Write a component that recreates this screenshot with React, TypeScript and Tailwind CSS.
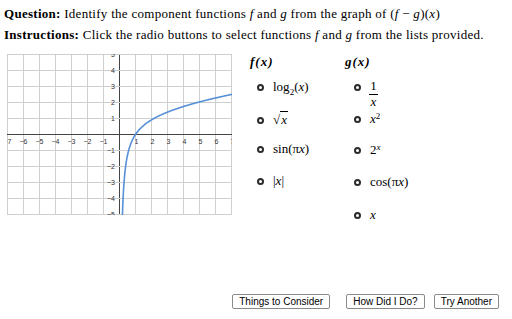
import React from 'react'

const serif = { fontFamily: '"Liberation Serif", "DejaVu Serif", serif' }

// plot mapping: 16px per unit, x in [-7,7], y in [-5,5]
const X = (x: number) => 0.5 + (x + 7) * 16
const Y = (y: number) => 0.5 + (5 - y) * 16

function curvePath() {
  const pts: string[] = []
  for (let i = 0; i <= 300; i++) {
    const x = 0.17 + (7.2 - 0.17) * Math.pow(i / 300, 1.8)
    const y = Math.sqrt(x) - 1 / x
    pts.push(`${i === 0 ? 'M' : 'L'}${X(x).toFixed(2)},${Y(y).toFixed(2)}`)
  }
  return pts.join(' ')
}

function Graph() {
  const xs = [-7, -6, -5, -4, -3, -2, -1, 0, 1, 2, 3, 4, 5, 6, 7]
  const ys = [5, 4, 3, 2, 1, 0, -1, -2, -3, -4, -5]
  return (
    <svg width="225" height="161" viewBox="0 0 225 161" className="block shrink-0 overflow-hidden">
      {xs.map(x => (
        <line key={'v' + x} x1={X(x)} y1={0} x2={X(x)} y2={161} stroke={x === 0 ? '#444' : '#cfcfcf'} strokeWidth="1" />
      ))}
      {ys.map(y => (
        <line key={'h' + y} x1={0} y1={Y(y)} x2={225} y2={Y(y)} stroke={y === 0 ? '#444' : '#cfcfcf'} strokeWidth="1" />
      ))}
      <g fontFamily='"Liberation Sans", Arial, sans-serif' fontSize="7" fill="#333">
        {xs.filter(x => x !== 0).map(x => (
          <text key={'lx' + x} x={X(x) + (x > 0 ? 1 : 0)} y={Y(0) + 9.8} textAnchor="middle">
            {x < 0 ? `−${-x}` : x}
          </text>
        ))}
        {ys.filter(y => y !== 0).map(y => (
          <text key={'ly' + y} x={X(0) - 4.5} y={Y(y) + 2.6} textAnchor="end">
            {y < 0 ? `−${-y}` : y}
          </text>
        ))}
      </g>
      <path d={curvePath()} fill="none" stroke="#5690d8" strokeWidth="1.6" strokeLinejoin="round" />
    </svg>
  )
}

function Radio() {
  return <span className="block w-[7px] h-[7px] rounded-full border-[2px] border-[#2b2b2b] shrink-0" />
}

function Opt({ children, mt, indent }: { children: React.ReactNode; mt: string; indent: string }) {
  return (
    <div className={`flex items-center h-[14px] ${mt} ${indent}`}>
      <Radio />
      <div className="ml-[9px] text-[13px] leading-[14px] whitespace-nowrap" style={serif}>
        {children}
      </div>
    </div>
  )
}

const I = ({ children }: { children: React.ReactNode }) => <i>{children}</i>

export default function App() {
  return (
    <div className="w-[512px] h-[319px] bg-white text-black flex flex-col overflow-hidden" style={serif}>
      <div className="pl-[4px] pt-[6px] text-[13px] leading-[16px] tracking-[0.28px] whitespace-nowrap">
        <p>
          <b>Question:</b> Identify the component functions <I>f</I> and <I>g</I> from the graph of (<I>f</I> − <I>g</I>)(<I>x</I>)
        </p>
        <p className="mt-[5px]">
          <b>Instructions:</b> Click the radio buttons to select functions <I>f</I> and <I>g</I> from the lists provided.
        </p>
      </div>

      <div className="flex mt-[11px] pl-[7px]">
        <Graph />

        <div className="ml-[18px] w-[95px] flex flex-col">
          <div className="text-[13px] leading-[16px] font-bold italic tracking-[1px]">f(x)</div>
          <Opt mt="mt-[10px]" indent="ml-[7px]">
            log<sub className="text-[9px] align-[-2px]">2</sub>(<I>x</I>)
          </Opt>
          <Opt mt="mt-[19px]" indent="ml-[7px]">
            <span>√<span className="border-t border-black pl-[1px] pr-[1px]"><I>x</I></span></span>
          </Opt>
          <Opt mt="mt-[15px]" indent="ml-[7px]">
            sin(π<I>x</I>)
          </Opt>
          <Opt mt="mt-[18px]" indent="ml-[7px]">
            |<I>x</I>|
          </Opt>
        </div>

        <div className="flex flex-col">
          <div className="text-[13px] leading-[16px] font-bold italic tracking-[1px]">g(x)</div>
          <div className="flex items-start h-[14px] mt-[10px] ml-[9px]">
            <div className="h-[14px] flex items-center"><Radio /></div>
            <div className="ml-[8px] flex flex-col items-center text-[13px] leading-[12px]" style={serif}>
              <span>1</span>
              <span className="block w-[9px] border-t border-black mt-[2px]" />
              <span className="mt-[1px]"><I>x</I></span>
            </div>
          </div>
          <Opt mt="mt-[18px]" indent="ml-[9px]">
            <I>x</I><sup className="text-[9px]">2</sup>
          </Opt>
          <Opt mt="mt-[17px]" indent="ml-[9px]">
            2<sup className="text-[9px] italic">x</sup>
          </Opt>
          <Opt mt="mt-[18px]" indent="ml-[9px]">
            cos(π<I>x</I>)
          </Opt>
          <Opt mt="mt-[19px]" indent="ml-[9px]">
            <I>x</I>
          </Opt>
        </div>
      </div>

      <div className="mt-auto mb-[10px] flex justify-end pr-[13px]" style={{ fontFamily: '"Liberation Sans", Arial, sans-serif' }}>
        <button className="h-[15px] px-[6px] text-[10px] leading-[13px] border border-[#8a8a8a] rounded-[2px] bg-white">Things to Consider</button>
        <button className="ml-[16px] h-[15px] px-[6px] text-[10px] leading-[13px] border border-[#8a8a8a] rounded-[2px] bg-white">How Did I Do?</button>
        <button className="ml-[9px] h-[15px] px-[6px] text-[10px] leading-[13px] border border-[#8a8a8a] rounded-[2px] bg-white">Try Another</button>
      </div>
    </div>
  )
}
